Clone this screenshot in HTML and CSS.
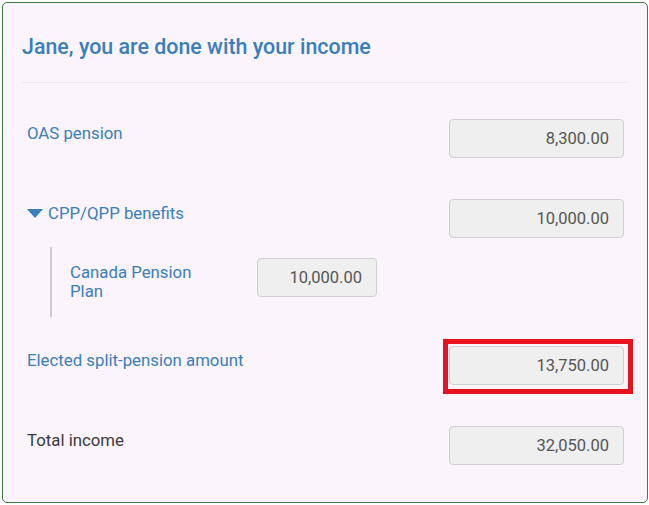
FILE: index.html
```html
<!DOCTYPE html>
<html>
<head>
<meta charset="utf-8">
<link rel="stylesheet" href="styles.css">
</head>
<body>
<div class="card">
  <h1 class="title">Jane, you are done with your income</h1>
  <div class="rows">
    <div class="row row-first">
      <span class="label link">OAS pension</span>
      <div class="field">8,300.00</div>
    </div>
    <div class="row">
      <span class="label link"><span class="caret"></span>CPP/QPP benefits</span>
      <div class="field">10,000.00</div>
    </div>
    <div class="sub">
      <span class="sub-label link">Canada Pension Plan</span>
      <div class="field field-sm">10,000.00</div>
    </div>
    <div class="row row-elected">
      <span class="label link">Elected split-pension amount</span>
      <div class="highlight"><div class="field">13,750.00</div></div>
    </div>
    <div class="row row-total">
      <span class="label dark">Total income</span>
      <div class="field">32,050.00</div>
    </div>
  </div>
</div>
</body>
</html>
```
FILE: styles.css
```css
* { box-sizing: border-box; }
body {
  margin: 0;
  background: #ffffff;
  font-family: Roboto, "Noto Sans", "Liberation Sans", sans-serif;
}
.card {
  margin: 2px 0 0 2px;
  width: 646px;
  height: 501px;
  border: 1px solid #3a7d3e;
  border-radius: 5px;
  background: #fbf4fc;
  padding: 0 20px 0 19px;
}
.title {
  margin: 0;
  padding: 30px 0 21px 0;
  font-size: 21.4px;
  font-weight: 500;
  line-height: 28px;
  color: #3a7ebb;
  border-bottom: 1px solid #ebe8ec;
}
.rows {
  padding: 0 3px 0 5px;
}
.row {
  display: flex;
  justify-content: space-between;
  align-items: flex-start;
}
.row-first { margin-top: 36px; }
.row + .row { margin-top: 41px; }
.row-elected { margin-top: 29px; }
.row-total { margin-top: 41px !important; }
.label {
  font-size: 16.8px;
  line-height: 20px;
  padding-top: 4px;
  display: flex;
  align-items: center;
}
.link { color: #3a7ebb; }
.dark { color: #3a3a3a; }
.caret {
  width: 0;
  height: 0;
  border-left: 8px solid transparent;
  border-right: 8px solid transparent;
  border-top: 9px solid #3a7ebb;
  margin-right: 5px;
}
.field {
  width: 175px;
  height: 39px;
  border: 1px solid #cfcfcf;
  border-radius: 4px;
  background: #efefef;
  color: #555555;
  font-size: 16.5px;
  line-height: 37px;
  text-align: right;
  padding-right: 14px;
}
.field-sm {
  width: 120px;
}
.sub {
  display: flex;
  align-items: flex-start;
  margin: 9px 0 0 23px;
  border-left: 2px solid #cccccc;
  height: 70px;
  padding: 11px 0 0 18px;
}
.sub-label {
  width: 187px;
  padding-right: 50px;
  font-size: 16.8px;
  line-height: 19px;
  padding-top: 5px;
}
.highlight {
  position: relative;
}
.highlight::after {
  content: "";
  position: absolute;
  left: -6px;
  top: -7px;
  right: -9px;
  bottom: -9px;
  border: 5px solid #e8121f;
}
```
